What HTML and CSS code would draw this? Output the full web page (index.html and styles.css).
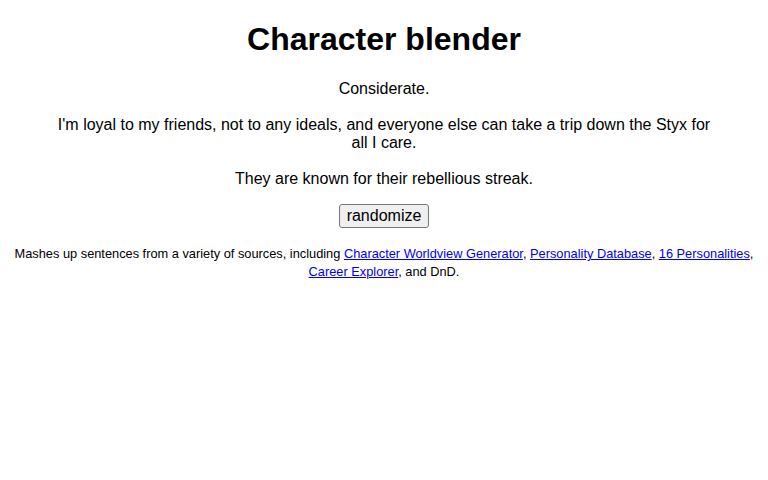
FILE: index.html
```html
<!DOCTYPE html>
<html>
<head>
<meta charset="utf-8">
<link rel="stylesheet" href="styles.css">
</head>
<body>
<main class="page">
  <h1 class="title">Character blender</h1>
  <div class="sentences">
    <p class="line">Considerate.</p>
    <p class="line">I'm loyal to my friends, not to any ideals, and everyone else can take a trip down the Styx for all I care.</p>
    <p class="line">They are known for their rebellious streak.</p>
  </div>
  <div class="actions"><button class="btn">randomize</button></div>
  <p class="credits">Mashes up sentences from a variety of sources, including <a href="#">Character Worldview Generator</a>, <a href="#">Personality Database</a>, <a href="#">16 Personalities</a>, <a href="#">Career Explorer</a>, and DnD.</p>
</main>
</body>
</html>
```
FILE: styles.css
```css
html, body {
  margin: 0;
  padding: 0;
  background: #fff;
}
body {
  padding: 8px;
  font-family: "Liberation Sans", Arial, sans-serif;
  color: #000;
}
.page {
  text-align: center;
}
.title {
  font-size: 32px;
  font-weight: bold;
  margin: 13px 0 22px;
  line-height: 37px;
}
.sentences {
  max-width: 660px;
  margin: 0 auto;
}
.line {
  font-size: 16px;
  line-height: 18px;
  margin: 18px 0;
}
.sentences .line:last-child {
  margin-bottom: 16px;
}
.actions {
  margin: 16px 0 0;
}
.btn {
  font-family: "Liberation Sans", Arial, sans-serif;
  font-size: 16px;
  line-height: 20px;
  height: 24px;
  padding: 1px 7px;
  background: #efefef;
  border: 1px solid #767676;
  border-radius: 3px;
  color: #000;
}
.credits {
  font-size: 12.8px;
  line-height: 18px;
  margin: 17px 0 16px;
}
.credits a {
  color: #0000ee;
}
```
